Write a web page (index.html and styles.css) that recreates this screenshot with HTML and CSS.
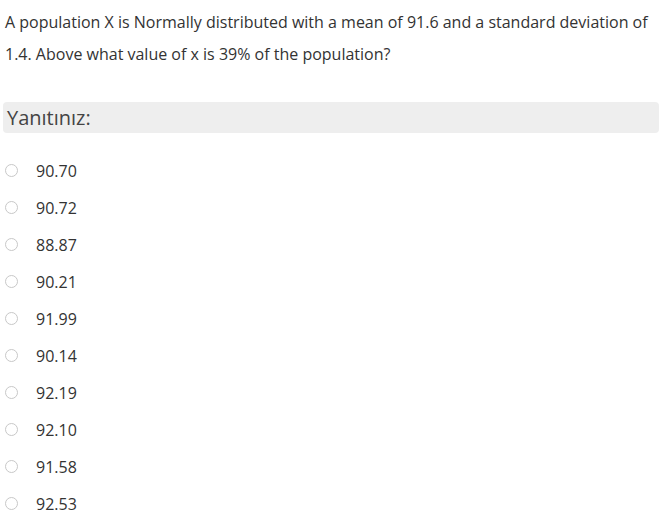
FILE: index.html
```html
<!DOCTYPE html>
<html>
<head>
<meta charset="utf-8">
<link rel="stylesheet" href="styles.css">
</head>
<body>
<div class="page">
  <p class="question">A population X is Normally distributed with a mean of 91.6 and a standard deviation of 1.4. Above what value of x is 39% of the population?</p>
  <div class="answer-label">Yanıtınız:</div>
  <ul class="options">
    <li class="option"><span class="radio"></span><span class="val">90.70</span></li>
    <li class="option"><span class="radio"></span><span class="val">90.72</span></li>
    <li class="option"><span class="radio"></span><span class="val">88.87</span></li>
    <li class="option"><span class="radio"></span><span class="val">90.21</span></li>
    <li class="option"><span class="radio"></span><span class="val">91.99</span></li>
    <li class="option"><span class="radio"></span><span class="val">90.14</span></li>
    <li class="option"><span class="radio"></span><span class="val">92.19</span></li>
    <li class="option"><span class="radio"></span><span class="val">92.10</span></li>
    <li class="option"><span class="radio"></span><span class="val">91.58</span></li>
    <li class="option"><span class="radio"></span><span class="val">92.53</span></li>
  </ul>
</div>
</body>
</html>
```
FILE: styles.css
```css
html, body {
  margin: 0;
  padding: 0;
  background: #fff;
}
body {
  font-family: "Open Sans", "Liberation Sans", sans-serif;
  color: #333;
}
.page {
  width: 656px;
  padding: 6px 0 0 3px;
}
.question {
  margin: 0;
  padding: 0 2px;
  font-size: 16px;
  line-height: 32px;
  color: #333;
}
.answer-label {
  margin-top: 32px;
  height: 31px;
  background: #eeeeee;
  border-radius: 4px;
  font-size: 20px;
  line-height: 31px;
  padding-left: 4px;
  color: #444;
}
.options {
  list-style: none;
  margin: 19px 0 0 0;
  padding: 0;
}
.option {
  display: flex;
  align-items: center;
  height: 37px;
  font-size: 16px;
}
.radio {
  width: 11px;
  height: 11px;
  border: 1px solid #c8c8c8;
  border-radius: 50%;
  margin-left: 2px;
  margin-right: 18px;
  flex: none;
}
.val {
  color: #333;
}
```
